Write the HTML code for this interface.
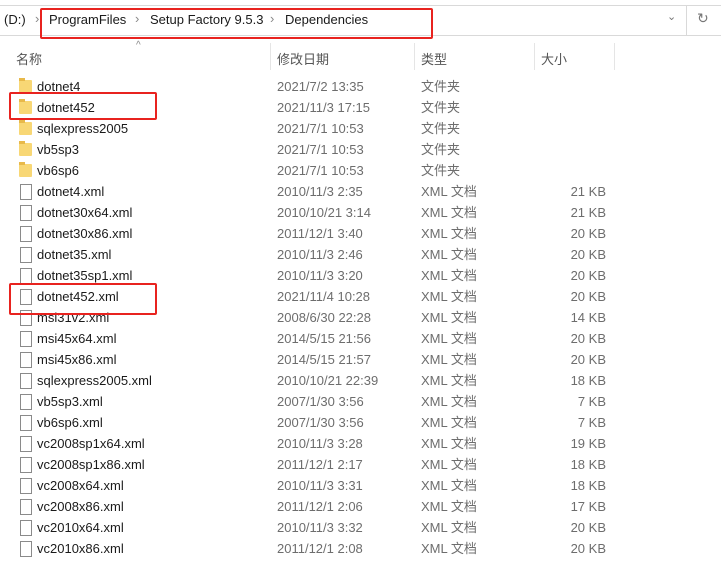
<!DOCTYPE html><html><head><meta charset="utf-8"><style>
body{margin:0;width:721px;height:580px;background:#fff;font-family:"Liberation Sans","Noto Sans CJK SC",sans-serif;font-size:13px;color:#1a1a1a;position:relative;overflow:hidden}
.a{position:absolute}
.row{position:absolute;left:0;height:21px;width:721px;line-height:21px}
.row span{position:absolute}
.n{left:37px}.d{left:277px;color:#6d6d6d}.t{left:421px;color:#6d6d6d}.s{right:115px;color:#6d6d6d}
.f{position:absolute;left:19px;top:4px;width:13px;height:13px;background:#f8d775;border-radius:1px}
.f:before{content:"";position:absolute;left:0;top:-2px;width:6px;height:3px;background:#e8b94a}
.x{position:absolute;left:20px;top:3px;width:10px;height:14px;border:1px solid #8a8a8a;background:#fff}
.red{position:absolute;border:2px solid #e8231f;border-radius:2px}
</style></head><body>
<div class="a" style="left:0;top:5px;width:686px;height:29px;border:1px solid #d9d9d9;border-left:none"></div>
<div class="a" style="left:686px;top:5px;width:34px;height:29px;border:1px solid #d9d9d9"></div>
<div class="a" style="left:4px;top:12px">(D:)</div>
<div class="a" style="left:35px;top:11px;color:#888">›</div>
<div class="a" style="left:49px;top:12px">ProgramFiles</div>
<div class="a" style="left:135px;top:11px;color:#888">›</div>
<div class="a" style="left:150px;top:12px">Setup Factory 9.5.3</div>
<div class="a" style="left:270px;top:11px;color:#888">›</div>
<div class="a" style="left:285px;top:12px">Dependencies</div>
<div class="a" style="left:667px;top:10px;color:#777;font-size:11px">⌄</div>
<div class="a" style="left:697px;top:10px;color:#777;font-size:14px">↻</div>
<div class="red" style="left:40px;top:8px;width:389px;height:27px"></div>
<div class="a" style="left:136px;top:40px;color:#888;font-size:10px">^</div>
<div class="a" style="left:16px;top:49px;color:#555">名称</div>
<div class="a" style="left:277px;top:49px;color:#555">修改日期</div>
<div class="a" style="left:421px;top:49px;color:#555">类型</div>
<div class="a" style="left:541px;top:49px;color:#555">大小</div>
<div class="a" style="left:270px;top:43px;width:1px;height:27px;background:#e5e5e5"></div>
<div class="a" style="left:414px;top:43px;width:1px;height:27px;background:#e5e5e5"></div>
<div class="a" style="left:534px;top:43px;width:1px;height:27px;background:#e5e5e5"></div>
<div class="a" style="left:614px;top:43px;width:1px;height:27px;background:#e5e5e5"></div>
<div class="row" style="top:76px"><i class="f"></i><span class="n">dotnet4</span><span class="d">2021/7/2 13:35</span><span class="t">文件夹</span></div>
<div class="row" style="top:97px"><i class="f"></i><span class="n">dotnet452</span><span class="d">2021/11/3 17:15</span><span class="t">文件夹</span></div>
<div class="row" style="top:118px"><i class="f"></i><span class="n">sqlexpress2005</span><span class="d">2021/7/1 10:53</span><span class="t">文件夹</span></div>
<div class="row" style="top:139px"><i class="f"></i><span class="n">vb5sp3</span><span class="d">2021/7/1 10:53</span><span class="t">文件夹</span></div>
<div class="row" style="top:160px"><i class="f"></i><span class="n">vb6sp6</span><span class="d">2021/7/1 10:53</span><span class="t">文件夹</span></div>
<div class="row" style="top:181px"><i class="x"></i><span class="n">dotnet4.xml</span><span class="d">2010/11/3 2:35</span><span class="t">XML 文档</span><span class="s">21 KB</span></div>
<div class="row" style="top:202px"><i class="x"></i><span class="n">dotnet30x64.xml</span><span class="d">2010/10/21 3:14</span><span class="t">XML 文档</span><span class="s">21 KB</span></div>
<div class="row" style="top:223px"><i class="x"></i><span class="n">dotnet30x86.xml</span><span class="d">2011/12/1 3:40</span><span class="t">XML 文档</span><span class="s">20 KB</span></div>
<div class="row" style="top:244px"><i class="x"></i><span class="n">dotnet35.xml</span><span class="d">2010/11/3 2:46</span><span class="t">XML 文档</span><span class="s">20 KB</span></div>
<div class="row" style="top:265px"><i class="x"></i><span class="n">dotnet35sp1.xml</span><span class="d">2010/11/3 3:20</span><span class="t">XML 文档</span><span class="s">20 KB</span></div>
<div class="row" style="top:286px"><i class="x"></i><span class="n">dotnet452.xml</span><span class="d">2021/11/4 10:28</span><span class="t">XML 文档</span><span class="s">20 KB</span></div>
<div class="row" style="top:307px"><i class="x"></i><span class="n">msi31v2.xml</span><span class="d">2008/6/30 22:28</span><span class="t">XML 文档</span><span class="s">14 KB</span></div>
<div class="row" style="top:328px"><i class="x"></i><span class="n">msi45x64.xml</span><span class="d">2014/5/15 21:56</span><span class="t">XML 文档</span><span class="s">20 KB</span></div>
<div class="row" style="top:349px"><i class="x"></i><span class="n">msi45x86.xml</span><span class="d">2014/5/15 21:57</span><span class="t">XML 文档</span><span class="s">20 KB</span></div>
<div class="row" style="top:370px"><i class="x"></i><span class="n">sqlexpress2005.xml</span><span class="d">2010/10/21 22:39</span><span class="t">XML 文档</span><span class="s">18 KB</span></div>
<div class="row" style="top:391px"><i class="x"></i><span class="n">vb5sp3.xml</span><span class="d">2007/1/30 3:56</span><span class="t">XML 文档</span><span class="s">7 KB</span></div>
<div class="row" style="top:412px"><i class="x"></i><span class="n">vb6sp6.xml</span><span class="d">2007/1/30 3:56</span><span class="t">XML 文档</span><span class="s">7 KB</span></div>
<div class="row" style="top:433px"><i class="x"></i><span class="n">vc2008sp1x64.xml</span><span class="d">2010/11/3 3:28</span><span class="t">XML 文档</span><span class="s">19 KB</span></div>
<div class="row" style="top:454px"><i class="x"></i><span class="n">vc2008sp1x86.xml</span><span class="d">2011/12/1 2:17</span><span class="t">XML 文档</span><span class="s">18 KB</span></div>
<div class="row" style="top:475px"><i class="x"></i><span class="n">vc2008x64.xml</span><span class="d">2010/11/3 3:31</span><span class="t">XML 文档</span><span class="s">18 KB</span></div>
<div class="row" style="top:496px"><i class="x"></i><span class="n">vc2008x86.xml</span><span class="d">2011/12/1 2:06</span><span class="t">XML 文档</span><span class="s">17 KB</span></div>
<div class="row" style="top:517px"><i class="x"></i><span class="n">vc2010x64.xml</span><span class="d">2010/11/3 3:32</span><span class="t">XML 文档</span><span class="s">20 KB</span></div>
<div class="row" style="top:538px"><i class="x"></i><span class="n">vc2010x86.xml</span><span class="d">2011/12/1 2:08</span><span class="t">XML 文档</span><span class="s">20 KB</span></div>
<div class="red" style="left:9px;top:92px;width:144px;height:24px"></div>
<div class="red" style="left:9px;top:283px;width:144px;height:28px"></div>
</body></html>
